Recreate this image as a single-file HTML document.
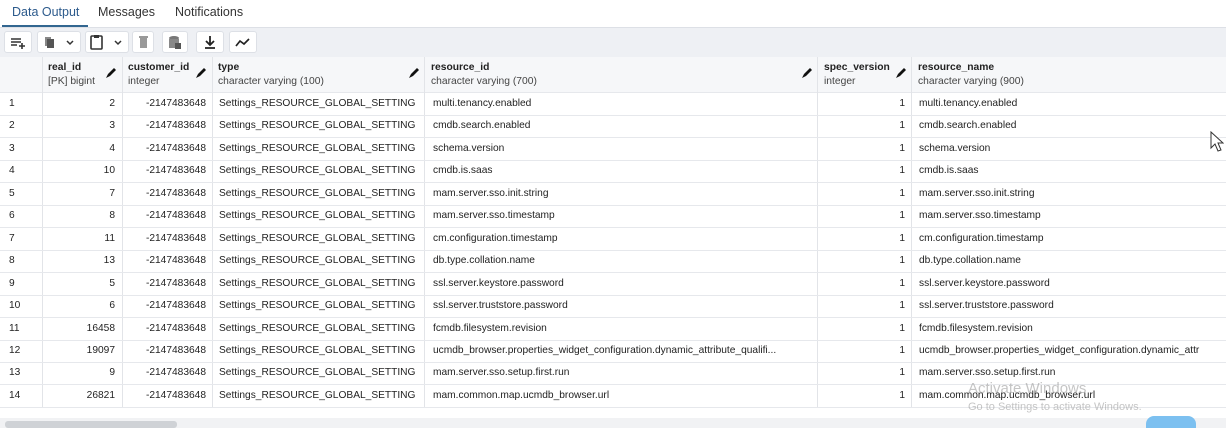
<!DOCTYPE html>
<html><head><style>
*{margin:0;padding:0;box-sizing:border-box}
html,body{width:1226px;height:428px;overflow:hidden}
body{background:#fff;font-family:"Liberation Sans",sans-serif;color:#222;position:relative}
.a{position:absolute;white-space:nowrap}
.tab{top:5px;font-size:12.5px;color:#333}
.tb{position:absolute;top:31px;height:22px;background:#fff;border:1px solid #dde0e6;border-radius:3px}
.h1{font-size:10.3px;font-weight:bold;color:#222;top:62px}
.h2{font-size:10.3px;color:#444;top:76px}
.c{font-size:10.2px;color:#222}
.r{text-align:right}
.vl{position:absolute;top:57px;height:351px;width:1px;background:#e2e4e8}
.hl{position:absolute;left:0;width:1226px;height:1px;background:#e6e8ec}
.pen{position:absolute;top:68px;width:11px;height:11px}
#clip{position:absolute;left:0;top:0;width:1226px;height:428px;overflow:hidden}
</style></head><body><div id="clip">
<div class="a tab" style="left:12px;color:#2c5a8c">Data Output</div>
<div class="a tab" style="left:98px">Messages</div>
<div class="a tab" style="left:175px">Notifications</div>
<div class="a" style="left:2px;top:25px;width:86px;height:2px;background:#326690"></div>
<div class="a" style="left:0;top:27px;width:1226px;height:30px;background:#eef0f4;border-top:1px solid #dde0e6"></div>
<div class="tb" style="left:4px;width:28px"><svg width="26" height="20"><path d="M6 7h10M6 10h10M6 13h6M17 11v6M14 14h6" stroke="#333" stroke-width="1.6" fill="none"/></svg></div>
<div class="tb" style="left:37px;width:44px"><svg width="42" height="20"><rect x="7" y="5" width="6" height="9" fill="#888"/><rect x="9" y="7" width="7" height="9" fill="#555"/><path d="M29 9l3 3 3-3" stroke="#333" stroke-width="1.5" fill="none"/></svg></div>
<div class="tb" style="left:85px;width:44px"><svg width="42" height="20"><rect x="5" y="4" width="11" height="13" rx="1" fill="none" stroke="#333" stroke-width="1.6"/><rect x="8" y="3" width="5" height="3" fill="#333"/><path d="M29 9l3 3 3-3" stroke="#333" stroke-width="1.5" fill="none"/></svg></div>
<div class="tb" style="left:132px;width:22px"><svg width="20" height="20"><rect x="7" y="6" width="7" height="10" fill="#999"/><rect x="6" y="4" width="9" height="2" fill="#999"/></svg></div>
<div class="tb" style="left:162px;width:26px"><svg width="24" height="20"><ellipse cx="11" cy="6" rx="5" ry="2" fill="#777"/><rect x="6" y="7" width="10" height="9" fill="#888"/><rect x="12" y="11" width="6" height="6" fill="#555"/></svg></div>
<div class="tb" style="left:196px;width:28px"><svg width="26" height="20"><path d="M13 4v8M9 9l4 4 4-4M8 16h10" stroke="#222" stroke-width="1.8" fill="none"/></svg></div>
<div class="tb" style="left:229px;width:28px"><svg width="26" height="20"><path d="M6 14l4-5 4 3 5-5" stroke="#222" stroke-width="1.7" fill="none"/></svg></div>

<div class="a" style="left:0;top:57px;width:1226px;height:35px;background:#f6f7f9"></div>
<div class="hl" style="top:92px"></div>
<div class="vl" style="left:42px"></div><div class="vl" style="left:122px"></div><div class="vl" style="left:212px"></div><div class="vl" style="left:424px"></div><div class="vl" style="left:817px"></div><div class="vl" style="left:911px"></div>

<div class="a h1" style="left:48px">real_id</div><div class="a h2" style="left:48px">[PK] bigint</div>
<div class="a h1" style="left:128px">customer_id</div><div class="a h2" style="left:128px">integer</div>
<div class="a h1" style="left:218px">type</div><div class="a h2" style="left:218px">character varying (100)</div>
<div class="a h1" style="left:431px">resource_id</div><div class="a h2" style="left:431px">character varying (700)</div>
<div class="a h1" style="left:824px">spec_version</div><div class="a h2" style="left:824px">integer</div>
<div class="a h1" style="left:918px">resource_name</div><div class="a h2" style="left:918px">character varying (900)</div>
<svg class="pen" style="left:105px"><path d="M1 10l2-4 6-6 2 2-6 6z" fill="#111"/></svg>
<svg class="pen" style="left:195px"><path d="M1 10l2-4 6-6 2 2-6 6z" fill="#111"/></svg>
<svg class="pen" style="left:408px"><path d="M1 10l2-4 6-6 2 2-6 6z" fill="#111"/></svg>
<svg class="pen" style="left:801px"><path d="M1 10l2-4 6-6 2 2-6 6z" fill="#111"/></svg>
<svg class="pen" style="left:895px"><path d="M1 10l2-4 6-6 2 2-6 6z" fill="#111"/></svg>

<div id="rows"></div>
<script>
var d=[[2,"multi.tenancy.enabled","multi.tenancy.enabled"],[3,"cmdb.search.enabled","cmdb.search.enabled"],[4,"schema.version","schema.version"],[10,"cmdb.is.saas","cmdb.is.saas"],[7,"mam.server.sso.init.string","mam.server.sso.init.string"],[8,"mam.server.sso.timestamp","mam.server.sso.timestamp"],[11,"cm.configuration.timestamp","cm.configuration.timestamp"],[13,"db.type.collation.name","db.type.collation.name"],[5,"ssl.server.keystore.password","ssl.server.keystore.password"],[6,"ssl.server.truststore.password","ssl.server.truststore.password"],[16458,"fcmdb.filesystem.revision","fcmdb.filesystem.revision"],[19097,"ucmdb_browser.properties_widget_configuration.dynamic_attribute_qualifi...","ucmdb_browser.properties_widget_configuration.dynamic_attr"],[9,"mam.server.sso.setup.first.run","mam.server.sso.setup.first.run"],[26821,"mam.common.map.ucmdb_browser.url","mam.common.map.ucmdb_browser.url"]];
var h="";
d.forEach(function(r,i){var y=93+i*22.45;var t=y+5;
h+='<div class="hl" style="top:'+(y+22)+'px"></div>';
h+='<div class="a c" style="left:9px;top:'+t+'px">'+(i+1)+'</div>';
h+='<div class="a c r" style="left:42px;width:73px;top:'+t+'px">'+r[0]+'</div>';
h+='<div class="a c r" style="left:122px;width:84px;top:'+t+'px">-2147483648</div>';
h+='<div class="a c" style="left:219px;top:'+t+'px">Settings_RESOURCE_GLOBAL_SETTING</div>';
h+='<div class="a c" style="left:433px;top:'+t+'px">'+r[1]+'</div>';
h+='<div class="a c r" style="left:817px;width:88px;top:'+t+'px">1</div>';
h+='<div class="a c" style="left:919px;top:'+t+'px">'+r[2]+'</div>';});
document.getElementById("rows").innerHTML=h;
</script>
<div class="a" style="left:968px;top:380px;font-size:15px;color:rgba(150,150,150,.55)">Activate Windows</div>
<div class="a" style="left:968px;top:401px;font-size:11px;color:rgba(150,150,150,.55)">Go to Settings to activate Windows.</div>
<div class="a" style="left:0;top:418px;width:1226px;height:10px;background:#f1f2f4"></div>
<div class="a" style="left:5px;top:421px;width:172px;height:7px;background:#cfd2d6;border-radius:3px"></div>
<div class="a" style="left:1146px;top:416px;width:50px;height:12px;background:#7cc0f0;border-radius:8px 8px 0 0"></div>
<svg class="a" style="left:1210px;top:131px" width="14" height="22"><path d="M1 1v16l4-4 3 7 3-1-3-7h5z" fill="#fff" stroke="#333"/></svg>
</div></body></html>
